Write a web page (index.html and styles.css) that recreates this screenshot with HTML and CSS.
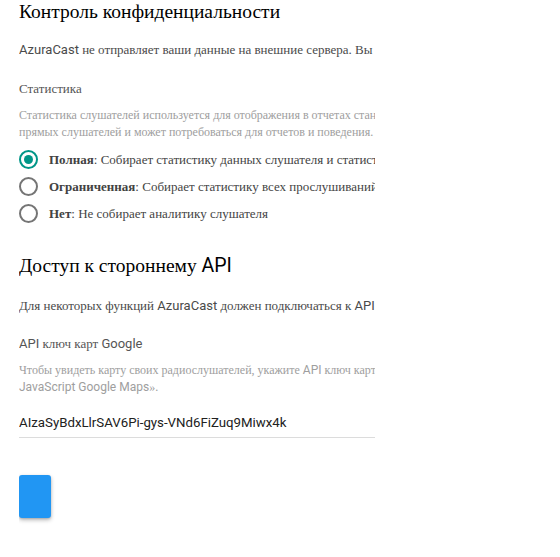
FILE: index.html
```html
<!DOCTYPE html>
<html lang="ru">
<head>
<meta charset="utf-8">
<title>Настройки</title>
<link rel="stylesheet" href="styles.css">
</head>
<body>
<div class="panel">
  <section class="group">
    <h2 class="title">Контроль конфиденциальности</h2>
    <p class="desc"><span class="lat">AzuraCast</span> не отправляет ваши данные на внешние сервера. Вы можете контролировать, как данные будут собираться.</p>

    <div class="field">
      <div class="label">Статистика</div>
      <div class="help">Статистика слушателей используется для отображения в отчетах станции, количества<br>прямых слушателей и может потребоваться для отчетов и поведения.</div>
      <div class="radios">
        <div class="radio-row">
          <span class="radio checked"></span>
          <span class="radio-text"><b>Полная</b>: Собирает статистику данных слушателя и статистику прослушиваний.</span>
        </div>
        <div class="radio-row">
          <span class="radio"></span>
          <span class="radio-text"><b>Ограниченная</b>: Собирает статистику всех прослушиваний без данных слушателя.</span>
        </div>
        <div class="radio-row">
          <span class="radio"></span>
          <span class="radio-text"><b>Нет</b>: Не собирает аналитику слушателя</span>
        </div>
      </div>
    </div>
  </section>

  <section class="group group-api">
    <h2 class="title">Доступ к стороннему <span class="lat">API</span></h2>
    <p class="desc">Для некоторых функций <span class="lat">AzuraCast</span> должен подключаться к <span class="lat">API</span> сторонних сервисов.</p>

    <div class="field">
      <div class="label"><span class="lat">API</span> ключ карт <span class="lat">Google</span></div>
      <div class="help">Чтобы увидеть карту своих радиослушателей, укажите <span class="lat">API</span> ключ карт «<span class="lat">Google Maps</span>» с доступом к<br><span class="lat">JavaScript Google Maps</span>».</div>
      <div class="input">AIzaSyBdxLlrSAV6Pi-gys-VNd6FiZuq9Miwx4k</div>
    </div>
  </section>

  <div class="actions">
    <span class="btn"></span>
  </div>
</div>
</body>
</html>
```

FILE: styles.css
```css
html, body {
  margin: 0;
  padding: 0;
  background: #ffffff;
}

body {
  font-family: "Liberation Serif", "Times New Roman", serif;
}

.panel {
  width: 356px;
  margin-left: 19px;
  overflow: hidden;
  white-space: nowrap;
}

.lat {
  font-family: Roboto, "Liberation Sans", sans-serif;
}

.title {
  margin: 0;
  font-size: 19.5px;
  line-height: 24px;
  font-weight: normal;
  color: #000000;
}

.desc {
  margin: 17px 0 0;
  font-size: 13px;
  line-height: 18px;
  color: #4a4a4a;
}

.field {
  margin-top: 21px;
}

.label {
  font-size: 13px;
  line-height: 18px;
  color: #555555;
}

.help {
  margin-top: 9px;
  font-size: 12px;
  line-height: 17px;
  color: #9e9e9e;
}

.radios {
  margin-top: 5px;
  display: flex;
  flex-direction: column;
}

.radio-row {
  height: 27px;
  display: flex;
  align-items: center;
  gap: 11px;
}

.radio {
  flex: none;
  box-sizing: border-box;
  width: 19px;
  height: 19px;
  border: 2px solid #757575;
  border-radius: 50%;
  display: flex;
  align-items: center;
  justify-content: center;
}

.radio.checked {
  border-color: #009688;
}

.radio.checked::after {
  content: "";
  width: 9px;
  height: 9px;
  border-radius: 50%;
  background: #009688;
}

.radio-text {
  font-size: 13px;
  line-height: 18px;
  color: #444444;
}

.radio-text b {
  font-weight: bold;
  color: #424242;
}

.group-api {
  margin-top: 27px;
}

.group-api .desc {
  margin-top: 19px;
}

.group-api .field {
  margin-top: 20px;
}

.input {
  margin-top: 17px;
  font-family: Roboto, "Liberation Sans", sans-serif;
  font-size: 13.25px;
  line-height: 20px;
  color: #212121;
  padding-bottom: 4px;
  border-bottom: 1px solid #dcdcdc;
}

.actions {
  margin-top: 37px;
  padding-bottom: 8px;
  display: flex;
}

.btn {
  display: block;
  width: 32px;
  height: 43px;
  background: #2196f3;
  border-radius: 3px;
  box-shadow: 0 2px 4px rgba(0, 0, 0, 0.28), 0 1px 2px rgba(0, 0, 0, 0.12);
}
```
